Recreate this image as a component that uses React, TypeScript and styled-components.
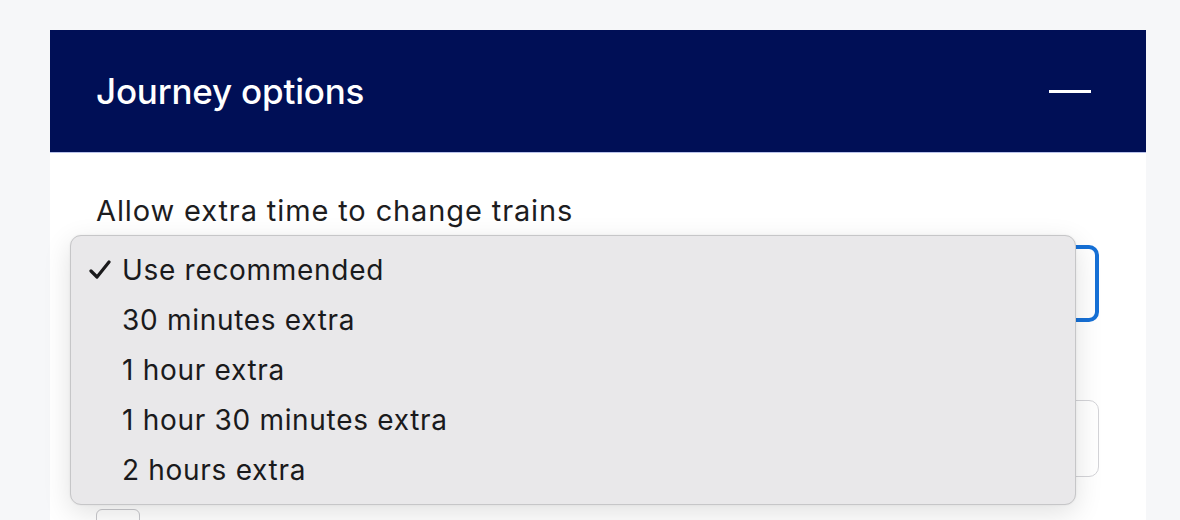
import React from 'react';
import styled, { createGlobalStyle } from 'styled-components';

const GlobalStyle = createGlobalStyle`
  html, body {
    margin: 0;
    padding: 0;
    background: #f6f7f9;
    font-family: Inter, "Noto Sans", sans-serif;
  }
`;

const Page = styled.div`
  position: relative;
  width: 1180px;
  height: 520px;
  overflow: hidden;
  padding: 30px 0 0 50px;
  box-sizing: border-box;
`;

const Card = styled.section`
  width: 1096px;
  background: #ffffff;
`;

const Header = styled.header`
  height: 122px;
  background: #000f56;
  border-bottom: 1px solid #b9c2ea;
  display: flex;
  align-items: center;
  justify-content: space-between;
  padding: 0 55px 0 46px;
`;

const Title = styled.h2`
  margin: 0;
  color: #ffffff;
  font-size: 35px;
  font-weight: 500;
  letter-spacing: -0.2px;
`;

const CollapseIcon = styled.span`
  display: block;
  width: 42px;
  height: 3px;
  background: #ffffff;
`;

const Body = styled.div`
  padding: 38px 47px 0 46px;
  display: flex;
  flex-direction: column;
`;

const Label = styled.label`
  font-size: 29px;
  letter-spacing: 0.88px;
  color: #1d1d1f;
  line-height: 40px;
`;

const Field = styled.div<{ $focused?: boolean }>`
  height: 77px;
  box-sizing: border-box;
  border-radius: 10px;
  border: ${(p) => (p.$focused ? '4px solid #1670d6' : '1.5px solid #d4d4d8')};
  background: #ffffff;
  margin-top: ${(p) => (p.$focused ? '14px' : '78px')};
`;

const Checkbox = styled.div`
  width: 44px;
  height: 44px;
  margin-top: 32px;
  border: 1.5px solid #c8c8cc;
  border-radius: 6px;
  box-sizing: border-box;
`;

const Menu = styled.ul`
  position: absolute;
  left: 70px;
  top: 235px;
  width: 1006px;
  height: 270px;
  margin: 0;
  padding: 9px 0 0;
  box-sizing: border-box;
  list-style: none;
  background: #e9e8ea;
  border: 1px solid #c6c6c8;
  border-radius: 11px;
  box-shadow: 0 8px 28px rgba(0, 0, 0, 0.12), 0 0 2px rgba(0, 0, 0, 0.08);
`;

const Option = styled.li`
  display: flex;
  align-items: center;
  height: 50px;
  padding-left: 51px;
  position: relative;
  font-size: 28px;
  letter-spacing: 0.7px;
  color: #1a1a1c;
`;

const Check = styled.span`
  position: absolute;
  left: 18px;
  top: 50%;
  transform: translateY(-50%);
  display: flex;
`;

const options = [
  'Use recommended',
  '30 minutes extra',
  '1 hour extra',
  '1 hour 30 minutes extra',
  '2 hours extra',
];

const App = () => {
  return (
    <>
      <GlobalStyle />
      <Page>
        <Card>
          <Header>
            <Title>Journey options</Title>
            <CollapseIcon />
          </Header>
          <Body>
            <Label>Allow extra time to change trains</Label>
            <Field $focused />
            <Field />
            <Checkbox />
          </Body>
        </Card>
        <Menu>
          {options.map((o, i) => (
            <Option key={o}>
              {i === 0 && (
                <Check>
                  <svg width="22" height="20" viewBox="0 0 22 20">
                    <path d="M2 11 L8 17 L20 2" fill="none" stroke="#1a1a1c" strokeWidth="3.2" strokeLinecap="round" strokeLinejoin="round" />
                  </svg>
                </Check>
              )}
              {o}
            </Option>
          ))}
        </Menu>
      </Page>
    </>
  );
};

export default App;
